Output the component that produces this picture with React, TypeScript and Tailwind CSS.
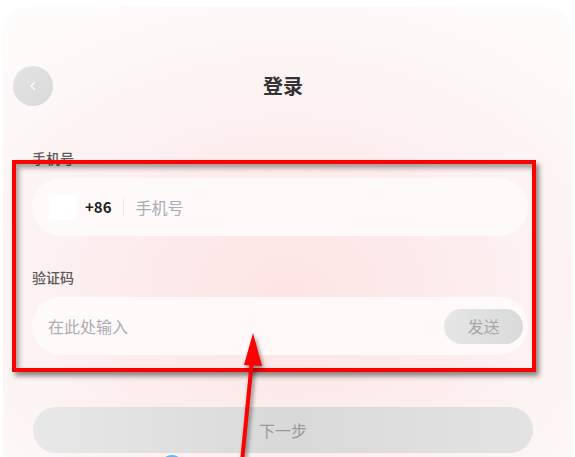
const App = () => {
  return (
    <div
      className="relative w-[575px] h-[457px] overflow-hidden bg-white"
      style={{ fontFamily: '"Noto Sans CJK SC", "Noto Sans", sans-serif' }}
    >
      <div className="ml-[3px] mr-[3px] mt-[7px] h-[460px] rounded-t-[26px] bg-[radial-gradient(ellipse_75%_70%_at_50%_62%,#fde4e4_0%,#fdefef_50%,#fdf8f8_85%,#fefbfb_100%)]">
        {/* header */}
        <div className="flex items-center pt-[59px] pl-[10px] pr-[10px]">
          <button className="w-10 h-10 rounded-full bg-[linear-gradient(135deg,#e4e4e4,#d9d9d9)] flex items-center justify-center">
            <svg width="12" height="12" viewBox="0 0 12 12" fill="none">
              <path d="M7.5 2.5L4 6l3.5 3.5" stroke="#ffffff" strokeWidth="1.3" strokeLinecap="round" strokeLinejoin="round" />
            </svg>
          </button>
          <h1 className="flex-1 text-center text-[20px] font-bold text-[#333] leading-[40px]">登录</h1>
          <div className="w-[49px]"></div>
        </div>

        {/* form */}
        <div className="pl-[29px] pr-[44px]">
          <div className="mt-[42px] text-[14px] leading-[20px] font-medium text-[#5a5a5a]">手机号</div>
          <div className="mt-[10px] h-[58px] rounded-full bg-[#fffbfb]/90 flex items-center pl-[17px]">
            <div className="w-[28px] h-[25px] bg-white"></div>
            <span className="ml-[8px] text-[15px] font-bold text-[#222]">+86</span>
            <div className="ml-[11px] w-px h-[20px] bg-[#f1e8e8]"></div>
            <span className="ml-[12px] text-[16px] text-[#a9acb2]">手机号</span>
          </div>

          <div className="mt-[31px] text-[14px] leading-[20px] font-medium text-[#5a5a5a]">验证码</div>
          <div className="mt-[10px] h-[58px] rounded-full bg-[#fffbfb]/90 flex items-center pl-[16px] pr-[5px]">
            <span className="flex-1 text-[16px] text-[#a9acb2]">在此处输入</span>
            <div className="w-[79px] h-[35px] rounded-full bg-[linear-gradient(90deg,#e6e6e6,#dadada)] flex items-center justify-center text-[16px] text-[#a8a8a8]">
              发送
            </div>
          </div>
        </div>

        <button className="mt-[52px] ml-[30px] w-[500px] h-[46px] rounded-full bg-[linear-gradient(90deg,#e8e8e8,#d9d9d9_50%,#e3e3e3)] text-[16px] text-[#999]">
          下一步
        </button>
        <div className="mt-[2px] ml-[157px] w-[24px] h-[24px] rounded-full border-[3px] border-[#63b8f4]"></div>
      </div>

      {/* annotation box */}
      <div className="absolute left-[12px] top-[160px] w-[524px] h-[212px] border-[4px] border-[#ff0000] shadow-[3px_4px_5px_rgba(0,0,0,0.45),inset_3px_4px_5px_rgba(0,0,0,0.35)]"></div>

      {/* annotation arrow */}
      <svg className="absolute left-0 top-0" width="575" height="457" viewBox="0 0 575 457" style={{ filter: "drop-shadow(2px 3px 2px rgba(0,0,0,0.45))" }}>
        <line x1="242" y1="462" x2="252" y2="360" stroke="#ff0000" strokeWidth="4" />
        <polygon points="253,333 262,366 244,365" fill="#ff0000" />
      </svg>
    </div>
  )
}

export default App
